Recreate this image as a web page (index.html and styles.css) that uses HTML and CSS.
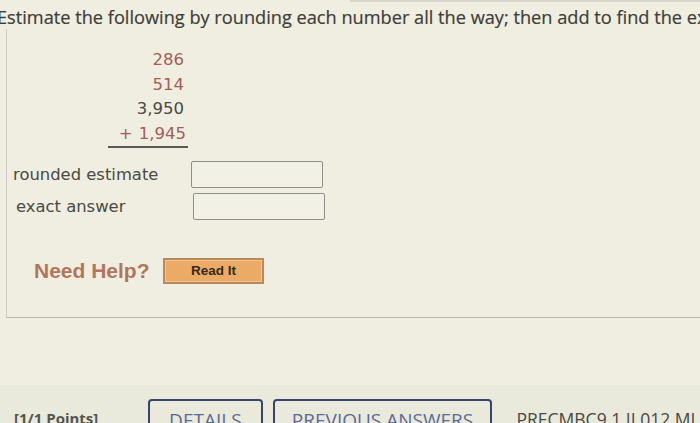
FILE: index.html
```html
<!DOCTYPE html>
<html>
<head>
<meta charset="utf-8">
<link rel="stylesheet" href="styles.css">
</head>
<body>
<div class="topline"></div>
<h1 class="title">Estimate the following by rounding each number all the way; then add to find the exact answer.</h1>
<div class="qbox">
  <div class="sum">
    <div class="num red">286</div>
    <div class="num red">514</div>
    <div class="num">3,950</div>
    <div class="num red last"><span class="plus">+</span> 1,945</div>
  </div>
  <div class="answers">
    <div class="arow r1"><span class="lbl">rounded estimate</span><span class="inp"></span></div>
    <div class="arow r2"><span class="lbl">exact answer</span><span class="inp"></span></div>
  </div>
  <div class="help">
    <span class="need">Need Help?</span>
    <span class="readit">Read It</span>
  </div>
</div>
<div class="footer">
  <span class="points">[1/1 Points]</span>
  <span class="btn details">DETAILS</span>
  <span class="btn prev">PREVIOUS ANSWERS</span>
  <span class="code">PRECMBC9 1.II.012.MI.</span>
</div>
</body>
</html>
```
FILE: styles.css
```css
html, body {
  margin: 0;
  padding: 0;
}
body {
  width: 700px;
  height: 423px;
  overflow: hidden;
  background: #efeee1;
  color: #4a4a44;
  position: relative;
}
.topline {
  position: absolute;
  top: 0;
  left: 350px;
  width: 350px;
  height: 2px;
  background: #d6d6cc;
}
.title {
  margin: 0 0 0 -3px;
  padding-top: 5px;
  font-family: "Open Sans", sans-serif;
  font-weight: 400;
  font-size: 18.2px;
  line-height: 24px;
  white-space: nowrap;
  color: #3e3e38;
  -webkit-text-stroke: 0.2px #3e3e38;
}
.qbox {
  margin-left: 6px;
  height: 289px;
  border-left: 1px solid #cbcbbf;
  border-bottom: 1px solid #b9b9ad;
  box-sizing: border-box;
}
.sum {
  width: 76px;
  margin-left: 101px;
  padding-top: 19px;
  font-family: "DejaVu Sans", sans-serif;
  font-size: 16.5px;
  line-height: 24.5px;
  text-align: right;
}
.num { color: #4a4a44; }
.num.red { color: #a25f58; }
.num.last {
  border-bottom: 2px solid #5a5a52;
  line-height: 24px;
  padding-right: 2px;
  margin-right: -4px;
}
.plus { margin-right: 1px; }
.answers {
  margin-top: 13px;
  font-family: "DejaVu Sans", sans-serif;
  font-size: 16.4px;
  color: #4a4a44;
}
.arow {
  display: flex;
  align-items: center;
  height: 27px;
}
.r1 { padding-left: 6px; }
.r2 { padding-left: 9px; margin-top: 5px; }
.r1 .lbl { width: 178px; }
.r2 .lbl { width: 177px; }
.inp {
  width: 130px;
  height: 25px;
  border: 1px solid #8f8f88;
  border-radius: 2px;
  background: #f2f1e6;
}
.help {
  display: flex;
  align-items: center;
  margin-top: 38px;
  padding-left: 27px;
}
.need {
  font-family: "Liberation Sans", sans-serif;
  font-weight: 700;
  font-size: 21px;
  color: #b3765a;
  width: 129px;
}
.readit {
  width: 97px;
  height: 22px;
  border: 2px solid #b98a5c;
  background: #ebab66;
  box-shadow: inset 0 0 0 1px #f3c48e;
  font-family: "Liberation Sans", sans-serif;
  font-weight: 700;
  font-size: 13.5px;
  color: #342a1a;
  display: flex;
  align-items: center;
  justify-content: center;
}
.footer {
  position: absolute;
  left: 0;
  top: 385px;
  width: 700px;
  height: 38px;
  background: #e9e9dc;
  display: flex;
  align-items: flex-start;
  font-family: "Open Sans", sans-serif;
  white-space: nowrap;
}
.points {
  margin-left: 14px;
  margin-top: 23px;
  font-size: 15px;
  font-weight: 700;
  color: #55554e;
  width: 136px;
}
.btn {
  margin-top: 14px;
  height: 30px;
  border: 2px solid #39436c;
  border-radius: 4px;
  box-sizing: border-box;
  font-size: 19px;
  color: #5e6a94;
  display: flex;
  justify-content: center;
  padding-top: 8px;
  line-height: 22px;
}
.details { width: 116px; }
.prev { width: 223px; margin-left: 10px; }
.code {
  margin-left: 24px;
  margin-top: 22px;
  font-size: 17.5px;
  color: #4a4a44;
}
```
